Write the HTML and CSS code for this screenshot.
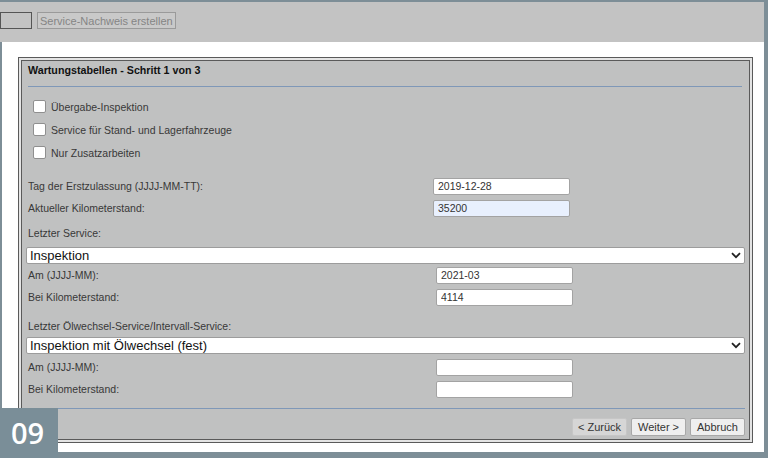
FILE: index.html
```html
<!DOCTYPE html>
<html lang="de">
<head>
  <meta charset="UTF-8">
  <title>Wartungstabellen</title>
  <link rel="stylesheet" href="styles.css">
</head>
<body>
  <div class="frame">
    <div class="toolbar">
      <input class="tb-input" type="text">
      <button class="tb-btn" disabled>Service-Nachweis erstellen</button>
    </div>
    <div class="page">
      <div class="panel-outer">
        <div class="panel">
          <div class="panel-title">Wartungstabellen - Schritt 1 von 3</div>

          <div class="checks">
            <label class="check"><input type="checkbox"><span>Übergabe-Inspektion</span></label>
            <label class="check"><input type="checkbox"><span>Service für Stand- und Lagerfahrzeuge</span></label>
            <label class="check"><input type="checkbox"><span>Nur Zusatzarbeiten</span></label>
          </div>

          <div class="fields">
            <div class="field">
              <label>Tag der Erstzulassung (JJJJ-MM-TT):</label>
              <input class="txt" type="text" value="2019-12-28">
            </div>
            <div class="field">
              <label>Aktueller Kilometerstand:</label>
              <input class="txt autofill" type="text" value="35200">
            </div>
          </div>

          <div class="group-label">Letzter Service:</div>
          <div class="select-wrap">
            <select class="sel"><option>Inspektion</option></select>
            <svg class="chev" width="10" height="7" viewBox="0 0 10 7"><path d="M1 1.2 L5 5.2 L9 1.2" fill="none" stroke="#222" stroke-width="1.8"/></svg>
          </div>
          <div class="fields second">
            <div class="field">
              <label>Am (JJJJ-MM):</label>
              <input class="txt" type="text" value="2021-03">
            </div>
            <div class="field">
              <label>Bei Kilometerstand:</label>
              <input class="txt" type="text" value="4114">
            </div>
          </div>

          <div class="group-label spaced">Letzter Ölwechsel-Service/Intervall-Service:</div>
          <div class="select-wrap tight">
            <select class="sel"><option>Inspektion mit Ölwechsel (fest)</option></select>
            <svg class="chev" width="10" height="7" viewBox="0 0 10 7"><path d="M1 1.2 L5 5.2 L9 1.2" fill="none" stroke="#222" stroke-width="1.8"/></svg>
          </div>
          <div class="fields second low">
            <div class="field">
              <label>Am (JJJJ-MM):</label>
              <input class="txt" type="text" value="">
            </div>
            <div class="field">
              <label>Bei Kilometerstand:</label>
              <input class="txt" type="text" value="">
            </div>
          </div>

          <div class="actions">
            <button class="btn flat">&lt; Zurück</button>
            <button class="btn">Weiter &gt;</button>
            <button class="btn">Abbruch</button>
          </div>
        </div>
      </div>
    </div>
    <div class="badge">09</div>
  </div>
</body>
</html>
```

FILE: styles.css
```css
* {
  box-sizing: border-box;
}
body {
  margin: 0;
  background: #7d8e97;
  font-family: "Liberation Sans", Arial, sans-serif;
  font-size: 10.5px;
  color: #383838;
}
.frame {
  position: relative;
  width: 768px;
  height: 458px;
  padding: 2px 4px 6px 2px;
  display: flex;
  flex-direction: column;
  overflow: hidden;
}
.toolbar {
  height: 40px;
  background: #c3c3c3;
  display: flex;
  align-items: flex-start;
  padding-top: 10px;
  margin-left: -2px;
}
.tb-input {
  width: 32px;
  height: 17px;
  border: 1px solid #555;
  background: #c3c3c3;
  margin: 0 5px 0 0;
  padding: 0;
}
.tb-btn {
  height: 17px;
  padding: 0 2px;
  font-family: inherit;
  font-size: 11px;
  color: #858585;
  background: #c9c9c9;
  border: 1px solid #9a9a9a;
  border-radius: 0;
}
.page {
  flex: 1;
  background: #fff;
  padding: 15px 11px 0 16px;
}
.panel-outer {
  border: 1px solid #5a5a5a;
  padding: 2px;
  background: #e4e4e4;
}
.panel {
  border: 1px solid #5a5a5a;
  background: #c0c1c1;
  padding: 0 7px 3px 6px;
}
.panel-title {
  font-weight: bold;
  font-size: 10.7px;
  color: #111;
  line-height: 14px;
  padding: 2px 0 9px;
  border-bottom: 1px solid #7f98b8;
}
.checks {
  margin-top: 8px;
}
.check {
  display: flex;
  align-items: center;
  height: 23px;
  padding-left: 5px;
}
.check input {
  margin: 0 5px 0 0;
  width: 13px;
  height: 13px;
  appearance: none;
  background: #fff;
  border: 1px solid #8f8f8f;
  border-radius: 2px;
}
.fields {
  margin-top: 11px;
}
.field {
  display: grid;
  grid-template-columns: 405px 137px;
  align-items: center;
  height: 22px;
}
.second .field {
  grid-template-columns: 408px 137px;
}
.second {
  margin-top: 0;
}
.low {
  margin-top: 2px;
}
.txt {
  height: 17px;
  border: 1px solid #a3a3a3;
  border-radius: 2px;
  background: #fff;
  padding: 0 4px;
  font-family: inherit;
  font-size: 10.5px;
  color: #333;
}
.autofill {
  background: #e8f0fe;
}
.group-label {
  margin-top: 7px;
  line-height: 14px;
}
.group-label.spaced {
  margin-top: 11px;
}
.select-wrap {
  position: relative;
  margin: 7px -3px 0 -2px;
}
.select-wrap.tight {
  margin-top: 4px;
}
.sel {
  display: block;
  width: 100%;
  height: 17px;
  appearance: none;
  background: #fff;
  border: 1px solid #9c9c9c;
  border-radius: 2px;
  padding: 0 3px;
  font-family: inherit;
  font-size: 13px;
  color: #111;
}
.chev {
  position: absolute;
  right: 4px;
  top: 5px;
}
.actions {
  border-top: 1px solid #7f98b8;
  margin-top: 8px;
  padding-top: 9px;
  display: flex;
  justify-content: flex-end;
  gap: 4px;
  margin-right: -3px;
}
.btn {
  height: 18px;
  width: 55px;
  padding: 0;
  font-family: inherit;
  font-size: 11px;
  color: #333;
  background: #efefef;
  border: 1px solid #a8a8a8;
  border-radius: 2px;
}
.btn.flat {
  background: #d6d6d6;
  border-color: #c6c6c6;
}
.badge {
  position: absolute;
  left: 0;
  bottom: 0;
  width: 58px;
  height: 50px;
  background: #7a8e98;
  color: #fff;
  font-family: "Open Sans", sans-serif;
  font-size: 29px;
  font-weight: 600;
  line-height: 50px;
  padding-left: 11px;
}
```
